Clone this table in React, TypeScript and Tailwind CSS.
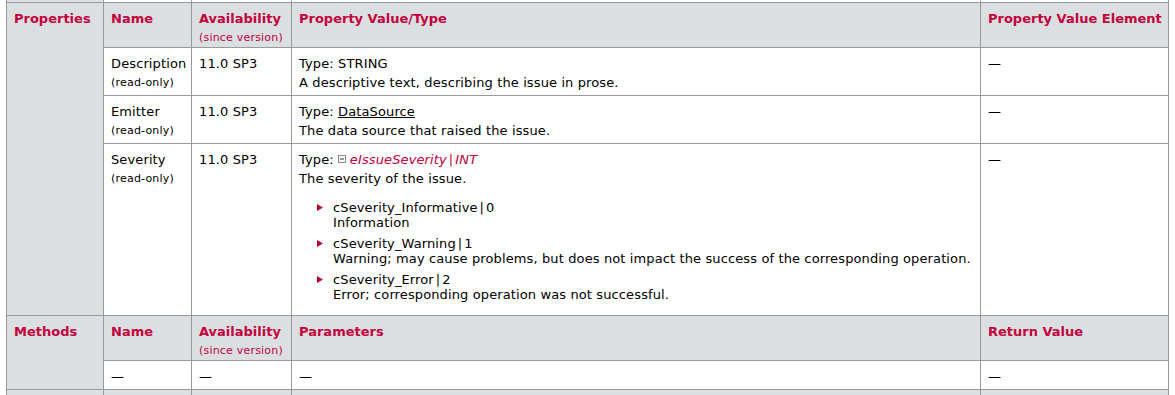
import React from 'react';

// ---------------------------------------------------------------------------------
const cellBase = 'border border-[#999] px-[7px] pt-[6px] align-top text-left';
const headCell = `${cellBase} bg-[#dcdfe2] pb-0 font-bold tracking-normal whitespace-nowrap text-[#c2003b]`;
const dataCell = `${cellBase} bg-white pb-[3px] font-normal text-black`;
const sideCell = `${cellBase} bg-[#dcdfe2] font-bold tracking-normal text-[#c2003b]`;

// ---------------------------------------------------------------------------------
function Since() {
  return (
    <div className="text-[11px] leading-[19px] font-normal tracking-[0.2px] text-[#c2003b]">(since version)</div>
  );
}

function ReadOnly() {
  return <div className="text-[11px] leading-[19px] tracking-[0.2px]">(read-only)</div>;
}

function Dash() {
  return <span>—</span>;
}

// verdana has a wider bar than dejavu, so pad it a little
function Piped({ text }: { readonly text: string }) {
  const [left, right] = text.split('|');
  return (
    <>
      {left}
      <span className="px-[2px]">|</span>
      {right}
    </>
  );
}

function Bullet() {
  return (
    <svg width="6" height="7" viewBox="0 0 6 7" className="absolute left-[-16px] top-[4px]">
      <polygon points="0,0 6,3.5 0,7" fill="#b5002f" />
    </svg>
  );
}

function Collapse() {
  return (
    <svg width="8" height="8" viewBox="0 0 8 8" className="mx-[4px] mb-[2px] inline-block align-middle">
      <rect x="0.5" y="0.5" width="7" height="7" fill="#fff" stroke="#8a8a8a" />
      <line x1="2" y1="4" x2="6" y2="4" stroke="#333" strokeWidth="1" />
    </svg>
  );
}

type TEnum = { readonly name: string; readonly text: string };

const severities: TEnum[] = [
  { name: 'cSeverity_Informative|0', text: 'Information' },
  { name: 'cSeverity_Warning|1', text: 'Warning; may cause problems, but does not impact the success of the corresponding operation.' },
  { name: 'cSeverity_Error|2', text: 'Error; corresponding operation was not successful.' },
];

// ---------------------------------------------------------------------------------
export default function App() {
  return (
    <div className="min-h-screen bg-white font-['DejaVu_Sans',Verdana,sans-serif] text-[13px] leading-[19px] tracking-[0.12px] text-black">
      <table className="ml-[6px] w-[1162px] table-fixed border-collapse">
        <colgroup>
          <col className="w-[97px]" />
          <col className="w-[88px]" />
          <col className="w-[100px]" />
          <col className="w-[689px]" />
          <col className="w-[188px]" />
        </colgroup>
        <tbody>
          {/* tail of the previous section */}
          <tr className="h-[2px]">
            <td className="border-x border-[#999] bg-[#dcdfe2] p-0" />
            <td className="border-x border-[#999] bg-white p-0" />
            <td className="border-x border-[#999] bg-white p-0" />
            <td className="border-x border-[#999] bg-white p-0" />
            <td className="border-x border-[#999] bg-white p-0" />
          </tr>

          {/* properties */}
          <tr>
            <th rowSpan={4} className={sideCell}>Properties</th>
            <th className={headCell}>Name</th>
            <th className={headCell}>
              Availability
              <Since />
            </th>
            <th className={headCell}>Property Value/Type</th>
            <th className={headCell}>Property Value Element</th>
          </tr>
          <tr>
            <td className={dataCell}>
              Description
              <ReadOnly />
            </td>
            <td className={dataCell}>11.0 SP3</td>
            <td className={dataCell}>
              <div>Type: STRING</div>
              <div>A descriptive text, describing the issue in prose.</div>
            </td>
            <td className={dataCell}><Dash /></td>
          </tr>
          <tr>
            <td className={dataCell}>
              Emitter
              <ReadOnly />
            </td>
            <td className={dataCell}>11.0 SP3</td>
            <td className={dataCell}>
              <div>
                Type: <span className="underline">DataSource</span>
              </div>
              <div>The data source that raised the issue.</div>
            </td>
            <td className={dataCell}><Dash /></td>
          </tr>
          <tr>
            <td className={dataCell}>
              Severity
              <ReadOnly />
            </td>
            <td className={dataCell}>11.0 SP3</td>
            <td className={dataCell}>
              <div>
                Type:
                <Collapse />
                <span className="italic text-[#c2003b]">
                  <Piped text="eIssueSeverity|INT" />
                </span>
              </div>
              <div>The severity of the issue.</div>
              <ul className="mt-[12px] mb-[10px] flex flex-col gap-[6px] pl-[34px]">
                {severities.map(s => (
                  <li key={s.name} className="relative leading-[15px]">
                    <Bullet />
                    <div>
                      <Piped text={s.name} />
                    </div>
                    <div className="whitespace-nowrap">{s.text}</div>
                  </li>
                ))}
              </ul>
            </td>
            <td className={dataCell}><Dash /></td>
          </tr>

          {/* methods */}
          <tr>
            <th rowSpan={2} className={sideCell}>Methods</th>
            <th className={headCell}>Name</th>
            <th className={headCell}>
              Availability
              <Since />
            </th>
            <th className={headCell}>Parameters</th>
            <th className={headCell}>Return Value</th>
          </tr>
          <tr>
            <td className={dataCell}><Dash /></td>
            <td className={dataCell}><Dash /></td>
            <td className={dataCell}><Dash /></td>
            <td className={dataCell}><Dash /></td>
          </tr>

          {/* start of the next section */}
          <tr className="h-[40px]">
            <td className="border border-[#999] bg-[#dcdfe2]" />
            <td className="border border-[#999] bg-[#dcdfe2]" />
            <td className="border border-[#999] bg-[#dcdfe2]" />
            <td className="border border-[#999] bg-[#dcdfe2]" />
            <td className="border border-[#999] bg-[#dcdfe2]" />
          </tr>
        </tbody>
      </table>
    </div>
  );
}
